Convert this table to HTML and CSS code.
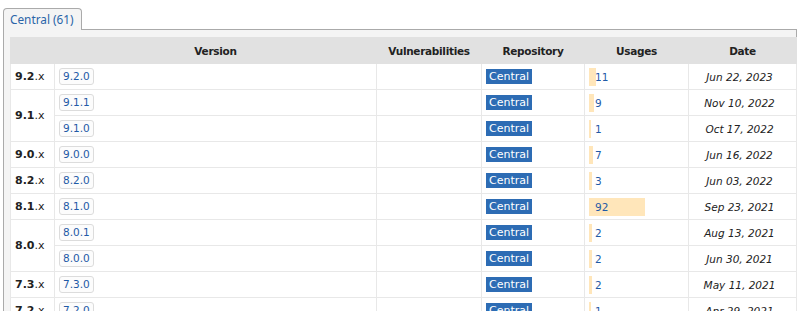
FILE: index.html
```html
<!DOCTYPE html>
<html>
<head>
<meta charset="utf-8">
<link rel="stylesheet" href="styles.css">
</head>
<body>
<div class="tabbar"><div class="tab">Central (61)</div><div class="tabrest"></div></div>
<div class="panel">
<table class="grid">
<thead>
<tr><th class="c-minor"></th><th class="c-ver">Version</th><th class="c-vul">Vulnerabilities</th><th class="c-repo">Repository</th><th class="c-use">Usages</th><th class="c-date">Date</th></tr>
</thead>
<tbody>
<tr><td class="minor"><b>9.2</b>.x</td><td><span class="vbadge">9.2.0</span></td><td></td><td class="repo"><span class="rbadge">Central</span></td><td class="use"><div class="bar" style="width:7px">11</div></td><td class="date">Jun 22, 2023</td></tr>
<tr><td class="minor" rowspan="2"><b>9.1</b>.x</td><td><span class="vbadge">9.1.1</span></td><td></td><td class="repo"><span class="rbadge">Central</span></td><td class="use"><div class="bar" style="width:5px">9</div></td><td class="date">Nov 10, 2022</td></tr>
<tr><td><span class="vbadge">9.1.0</span></td><td></td><td class="repo"><span class="rbadge">Central</span></td><td class="use"><div class="bar" style="width:2px">1</div></td><td class="date">Oct 17, 2022</td></tr>
<tr><td class="minor"><b>9.0</b>.x</td><td><span class="vbadge">9.0.0</span></td><td></td><td class="repo"><span class="rbadge">Central</span></td><td class="use"><div class="bar" style="width:4px">7</div></td><td class="date">Jun 16, 2022</td></tr>
<tr><td class="minor"><b>8.2</b>.x</td><td><span class="vbadge">8.2.0</span></td><td></td><td class="repo"><span class="rbadge">Central</span></td><td class="use"><div class="bar" style="width:3px">3</div></td><td class="date">Jun 03, 2022</td></tr>
<tr><td class="minor"><b>8.1</b>.x</td><td><span class="vbadge">8.1.0</span></td><td></td><td class="repo"><span class="rbadge">Central</span></td><td class="use"><div class="bar" style="width:56px">92</div></td><td class="date">Sep 23, 2021</td></tr>
<tr><td class="minor" rowspan="2"><b>8.0</b>.x</td><td><span class="vbadge">8.0.1</span></td><td></td><td class="repo"><span class="rbadge">Central</span></td><td class="use"><div class="bar" style="width:3px">2</div></td><td class="date">Aug 13, 2021</td></tr>
<tr><td><span class="vbadge">8.0.0</span></td><td></td><td class="repo"><span class="rbadge">Central</span></td><td class="use"><div class="bar" style="width:3px">2</div></td><td class="date">Jun 30, 2021</td></tr>
<tr><td class="minor"><b>7.3</b>.x</td><td><span class="vbadge">7.3.0</span></td><td></td><td class="repo"><span class="rbadge">Central</span></td><td class="use"><div class="bar" style="width:3px">2</div></td><td class="date">May 11, 2021</td></tr>
<tr><td class="minor"><b>7.2</b>.x</td><td><span class="vbadge">7.2.0</span></td><td></td><td class="repo"><span class="rbadge">Central</span></td><td class="use"><div class="bar" style="width:2px">1</div></td><td class="date">Apr 29, 2021</td></tr>
</tbody>
</table>
</div>
</body>
</html>
```
FILE: styles.css
```css
html, body { margin: 0; padding: 0; background: #fff; }
body { font-family: "DejaVu Sans", Verdana, sans-serif; font-size: 10.5px; color: #222; }
.tabbar { display: flex; align-items: flex-end; padding: 8px 0 0 3px; }
.tab {
  font-family: "Noto Sans", "Open Sans", sans-serif; font-size: 11.8px; color: #2a64a8;
  background: #f4f4f4; border: 1px solid #aaa; border-bottom: none; border-radius: 4px 4px 0 0;
  padding: 2px 7px 3px 6px; line-height: 16px;
}
.tabrest { flex: 1; border-bottom: 1px solid #aaa; margin-right: 3px; }
.panel { margin: 0 3px; border: 1px solid #aaa; border-top: none; background: #f4f4f4; padding: 7px 6px; }
.grid { width: 780px; border-collapse: collapse; background: #fff; table-layout: fixed; }
.grid th { background: #e1e1e1; font-weight: bold; height: 25px; padding: 0; font-size: 10.5px; letter-spacing: -0.3px; text-align: center; border: 1px solid #e1e1e1; }
.c-minor { width: 43px; }
.c-ver { width: 321px; }
.c-vul { width: 104px; }
.c-repo { width: 102px; }
.c-use { width: 103px; }
.c-date { width: 107px; }
.grid td { border: 1px solid #e8e8e8; height: 26px; padding: 0 4px; box-sizing: border-box; }
.grid td.minor { padding-left: 4px; font-size: 11px; }
.minor b { font-weight: bold; }
.vbadge { display: inline-block; border: 1px solid #dcdcdc; border-radius: 3px; padding: 1px 3px; color: #1f5aa6; line-height: 13px; background: #fcfcfc; }
.repo { padding-left: 4px; }
.rbadge { display: inline-block; background: #2d6cb4; color: #fff; padding: 0 3px; line-height: 15px; font-size: 11px; }
.use { padding-left: 5px; }
.bar { height: 18px; line-height: 18px; background: #ffe6ba; white-space: nowrap; text-indent: 6px; color: #1f5aa6; overflow: visible; }
.grid td.date { text-align: center; font-style: italic; padding: 0 8px 0 2px; }
```
